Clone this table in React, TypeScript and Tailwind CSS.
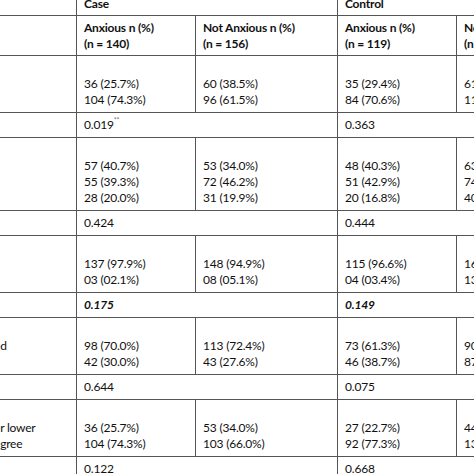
import React from "react";

const font = { fontFamily: "Lato, 'Open Sans', sans-serif" };

function Lines({ items }: { items: React.ReactNode[] }) {
  return (
    <div className="flex flex-col">
      {items.map((t, i) => (
        <div key={i} className="h-[16px] leading-[16px] whitespace-nowrap">
          {t === "" ? "\u00a0" : t}
        </div>
      ))}
    </div>
  );
}

const cell = "bg-white pl-[7px] pt-[4px] pb-[4px] overflow-hidden";

type DataRow = { label: React.ReactNode[]; cols: string[][] };

const groups: { row: DataRow; p1: React.ReactNode; p2: React.ReactNode }[] = [
  {
    row: {
      label: ["", "", ""],
      cols: [
        ["", "36 (25.7%)", "104 (74.3%)"],
        ["", "60 (38.5%)", "96 (61.5%)"],
        ["", "35 (29.4%)", "84 (70.6%)"],
        ["", "61 (34.5%)", "116 (65.5%)"],
      ],
    },
    p1: (
      <span>
        0.019<sup className="text-[7px] text-[#777] align-[3px]">**</sup>
      </span>
    ),
    p2: "0.363",
  },
  {
    row: {
      label: ["", "", "", ""],
      cols: [
        ["", "57 (40.7%)", "55 (39.3%)", "28 (20.0%)"],
        ["", "53 (34.0%)", "72 (46.2%)", "31 (19.9%)"],
        ["", "48 (40.3%)", "51 (42.9%)", "20 (16.8%)"],
        ["", "63 (35.6%)", "74 (41.8%)", "40 (22.6%)"],
      ],
    },
    p1: "0.424",
    p2: "0.444",
  },
  {
    row: {
      label: ["", "", ""],
      cols: [
        ["", "137 (97.9%)", "03 (02.1%)"],
        ["", "148 (94.9%)", "08 (05.1%)"],
        ["", "115 (96.6%)", "04 (03.4%)"],
        ["", "164 (92.7%)", "13 (07.3%)"],
      ],
    },
    p1: <span className="font-bold italic">0.175</span>,
    p2: <span className="font-bold italic">0.149</span>,
  },
  {
    row: {
      label: ["", <span className="-ml-[6px] inline-block">ed</span>, ""],
      cols: [
        ["", "98 (70.0%)", "42 (30.0%)"],
        ["", "113 (72.4%)", "43 (27.6%)"],
        ["", "73 (61.3%)", "46 (38.7%)"],
        ["", "90 (50.8%)", "87 (49.2%)"],
      ],
    },
    p1: "0.644",
    p2: "0.075",
  },
  {
    row: {
      label: [
        "",
        <span className="-ml-[6px] inline-block">er lower</span>,
        <span className="-ml-[6px] inline-block">egree</span>,
      ],
      cols: [
        ["", "36 (25.7%)", "104 (74.3%)"],
        ["", "53 (34.0%)", "103 (66.0%)"],
        ["", "27 (22.7%)", "92 (77.3%)"],
        ["", "44 (24.9%)", "133 (75.1%)"],
      ],
    },
    p1: "0.122",
    p2: "0.668",
  },
];

export default function App() {
  return (
    <div className="w-[474px] h-[474px] overflow-hidden bg-white text-[#111]" style={font}>
      <div className="-mt-[4px] w-[640px] grid grid-cols-[76px_118px_141px_118px_180px] gap-px bg-[#555] text-[12px] tracking-[-0.2px]">
        {/* header row 0 */}
        <div className="bg-white pb-[3px]"></div>
        <div className="col-span-2 bg-white pl-[7px] pb-[3px] font-bold leading-[16px]">Case</div>
        <div className="col-span-2 bg-white pl-[7px] pb-[3px] font-bold leading-[16px]">Control</div>
        {/* header row 1 */}
        <div className="bg-white"></div>
        <div className="bg-white pl-[7px] pt-[4px] pb-[3px] font-bold">
          <Lines items={["Anxious n (%)", "(n = 140)"]} />
        </div>
        <div className="bg-white pl-[7px] pt-[4px] pb-[3px] font-bold">
          <Lines items={["Not Anxious n (%)", "(n = 156)"]} />
        </div>
        <div className="bg-white pl-[7px] pt-[4px] pb-[3px] font-bold">
          <Lines items={["Anxious n (%)", "(n = 119)"]} />
        </div>
        <div className="bg-white pl-[7px] pt-[4px] pb-[3px] font-bold">
          <Lines items={["Not Anxious n (%)", "(n = 177)"]} />
        </div>
        {groups.map((g, gi) => (
          <React.Fragment key={gi}>
            <div className="bg-white pt-[4px] pb-[4px] overflow-hidden">
              <Lines items={g.row.label} />
            </div>
            {g.row.cols.map((c, ci) => (
              <div key={ci} className={cell}>
                <Lines items={c} />
              </div>
            ))}
            <div className="bg-white"></div>
            <div className="col-span-2 bg-white pl-[7px] pt-[4px] pb-[4px] leading-[16px]">{g.p1}</div>
            <div className="col-span-2 bg-white pl-[7px] pt-[4px] pb-[4px] leading-[16px]">{g.p2}</div>
          </React.Fragment>
        ))}
      </div>
    </div>
  );
}
